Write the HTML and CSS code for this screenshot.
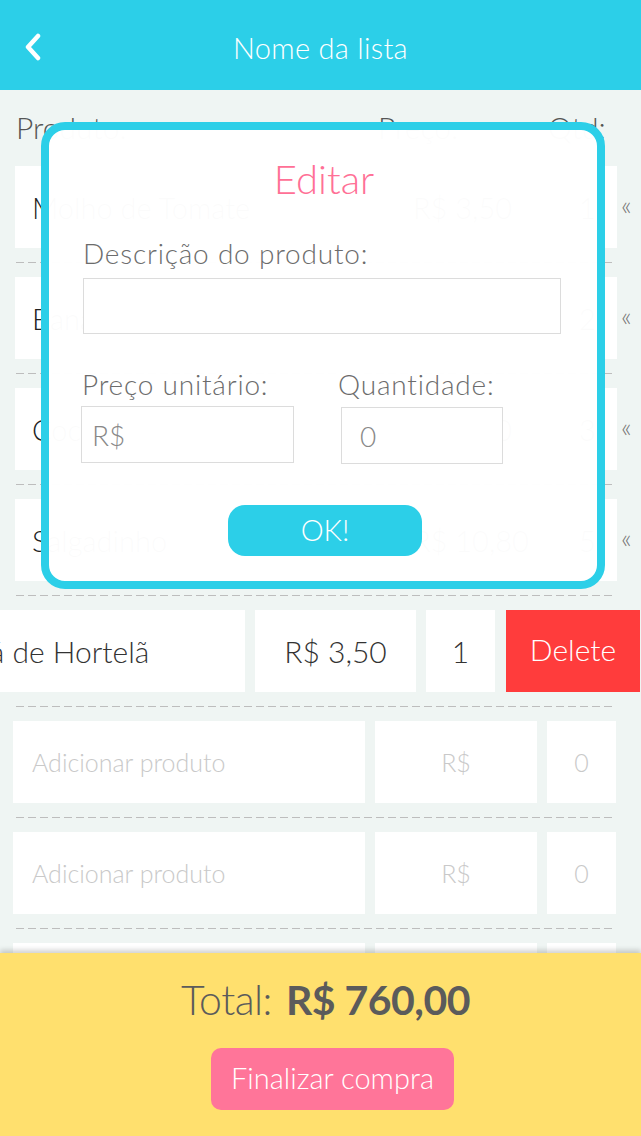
FILE: index.html
```html
<!DOCTYPE html>
<html lang="pt-BR">
<head>
<meta charset="utf-8">
<title>Nome da lista</title>
<link rel="stylesheet" href="styles.css">
</head>
<body>
<div class="app">
  <header class="topbar">
    <span class="back">
      <svg width="18" height="28" viewBox="0 0 18 28"><path d="M14 3 L4 14 L14 25" fill="none" stroke="#fff" stroke-width="4.5" stroke-linecap="round" stroke-linejoin="round"/></svg>
    </span>
    <h1 class="title">Nome da lista</h1>
  </header>

  <main class="content">
    <div class="colheads">
      <span class="ch-name">Produto:</span>
      <span class="ch-price">Preço:</span>
      <span class="ch-qty">Qtd:</span>
    </div>

    <div class="list">
      <div class="item">
        <div class="card"><span class="c-name">Molho de Tomate</span><span class="c-price">R$ 3,50</span><span class="c-qty">1</span></div>
        <span class="hint">«</span>
      </div>
      <div class="sep"></div>
      <div class="item">
        <div class="card"><span class="c-name">Banana</span><span class="c-price">R$ 4,20</span><span class="c-qty">2</span></div>
        <span class="hint">«</span>
      </div>
      <div class="sep"></div>
      <div class="item">
        <div class="card"><span class="c-name">Coca-Cola</span><span class="c-price">R$ 6,90</span><span class="c-qty">3</span></div>
        <span class="hint">«</span>
      </div>
      <div class="sep"></div>
      <div class="item">
        <div class="card"><span class="c-name">Salgadinho</span><span class="c-price">R$ 10,80</span><span class="c-qty">5</span></div>
        <span class="hint">«</span>
      </div>
      <div class="sep"></div>
      <div class="row slid">
        <div class="cell cell-name dark">Chá de Hortelã</div>
        <div class="cell cell-price dark">R$ 3,50</div>
        <div class="cell cell-qty dark">1</div>
        <div class="delete">Delete</div>
      </div>
      <div class="sep"></div>
      <div class="row">
        <div class="cell cell-name ph">Adicionar produto</div>
        <div class="cell cell-price ph">R$</div>
        <div class="cell cell-qty ph">0</div>
      </div>
      <div class="sep"></div>
      <div class="row">
        <div class="cell cell-name ph">Adicionar produto</div>
        <div class="cell cell-price ph">R$</div>
        <div class="cell cell-qty ph">0</div>
      </div>
      <div class="sep"></div>
      <div class="row">
        <div class="cell cell-name"></div>
        <div class="cell cell-price"></div>
        <div class="cell cell-qty"></div>
      </div>
    </div>
  </main>

  <footer class="footer">
    <div class="total"><span class="total-label">Total:</span><span class="total-value">R$ 760,00</span></div>
    <button class="finish">Finalizar compra</button>
  </footer>

  <div class="modal">
    <h2 class="modal-title">Editar</h2>
    <label class="label">Descrição do produto:</label>
    <div class="input input-desc"></div>
    <div class="pair">
      <div class="field f-price">
        <label class="label">Preço unitário:</label>
        <div class="input input-price">R$</div>
      </div>
      <div class="field f-qty">
        <label class="label">Quantidade:</label>
        <div class="input input-qty">0</div>
      </div>
    </div>
    <button class="ok">OK!</button>
  </div>
</div>
</body>
</html>
```

FILE: styles.css
```css
* { box-sizing: border-box; }
html, body { margin: 0; padding: 0; }
body {
  width: 641px;
  height: 1136px;
  overflow: hidden;
  font-family: "Lato", "Open Sans", sans-serif;
  font-weight: 300;
  background: #eff5f3;
}
.app {
  position: relative;
  width: 641px;
  height: 1136px;
  display: flex;
  flex-direction: column;
}
.topbar {
  height: 90px;
  flex: none;
  background: #2ccfe8;
  display: flex;
  align-items: center;
  justify-content: center;
  position: relative;
}
.back {
  position: absolute;
  left: 24px;
  top: 33px;
  display: flex;
}
.title {
  margin: 0;
  font-size: 29px;
  font-weight: 300;
  color: #fff;
  letter-spacing: 0.3px;
  padding: 4px 0 0 0;
}
.content {
  flex: 1;
  overflow: hidden;
  position: relative;
}
.colheads {
  height: 76px;
  display: flex;
  align-items: center;
  font-size: 30px;
  color: #555;
  padding-bottom: 2px;
}
.ch-name { margin-left: 16px; width: 362px; }
.ch-price { width: 170px; }

.item {
  height: 82px;
  display: flex;
  align-items: center;
}
.card {
  margin-left: 15px;
  width: 602px;
  flex: none;
  height: 82px;
  background: #fff;
  display: flex;
  align-items: center;
  font-size: 29px;
  color: #222;
}
.c-name { margin-left: 17px; width: 381px; }
.c-price { width: 166px; color: #333; }
.c-qty { color: #333; }
.hint {
  margin-left: 4px;
  font-size: 27px;
  color: #777;
  line-height: 1;
  padding-bottom: 6px;
}
.sep {
  height: 29px;
  display: flex;
  align-items: center;
  padding: 0 27px 0 16px;
}
.sep::before {
  content: "";
  flex: 1;
  height: 1px;
  background: repeating-linear-gradient(to right, #bdbdbd 0 8px, transparent 8px 12px);
}
.row {
  height: 82px;
  display: flex;
  margin-left: 13px;
  gap: 10px;
}
.row.slid { transform: translateX(-120px); }
.cell {
  flex: none;
  background: #fff;
  height: 82px;
  display: flex;
  align-items: center;
}
.cell-name { width: 352px; padding-left: 19px; }
.cell-price { width: 162px; justify-content: center; }
.cell-qty { width: 69px; justify-content: center; }
.ph { font-size: 25px; color: #c9c9c9; }
.dark { font-size: 30px; color: #333; }
.slid .cell-name { padding-left: 60px; }
.slid .cell-price { width: 161px; }
.delete {
  flex: none;
  margin-left: 1px;
  width: 134px;
  height: 82px;
  background: #ff3c3c;
  color: #fff;
  font-size: 30px;
  display: flex;
  align-items: center;
  justify-content: center;
  padding-bottom: 4px;
}

.footer {
  height: 183px;
  flex: none;
  background: #ffe06e;
  box-shadow: 0 -3px 5px rgba(0,0,0,0.18);
  position: relative;
  display: flex;
  flex-direction: column;
  align-items: center;
}
.total {
  margin: 21px 0 0 10px;
  font-size: 41px;
  line-height: 52px;
  color: #5b5b5b;
  display: flex;
  align-items: baseline;
  gap: 14px;
  letter-spacing: -0.5px;
}
.total-label { font-weight: 300; }
.total-value { font-weight: 700; }
.finish {
  margin: 22px 0 0 24px;
  width: 243px;
  height: 62px;
  border: 0;
  border-radius: 10px;
  background: #ff7599;
  color: #fff;
  font-family: inherit;
  font-weight: 300;
  font-size: 29px;
  padding: 0 0 4px;
}

.modal {
  position: absolute;
  left: 41px;
  top: 122px;
  width: 564px;
  height: 467px;
  border: 8px solid #2ccfe8;
  border-radius: 24px;
  background: rgba(255,255,255,0.985);
  display: flex;
  flex-direction: column;
  padding: 25px 0 0 0;
}
.modal-title {
  margin: 0;
  height: 48px;
  line-height: 48px;
  text-align: center;
  font-size: 40px;
  font-weight: 300;
  color: #ff7096;
  padding-left: 2px;
}
.label {
  display: block;
  height: 34px;
  line-height: 34px;
  font-size: 28px;
  color: #6c6c6c;
  letter-spacing: 0.8px;
  white-space: nowrap;
}
.modal > .label { margin: 33px 0 0 34px; }
.input {
  border: 1px solid #dcdcdc;
  background: #fff;
  display: flex;
  align-items: center;
  font-size: 28px;
  color: #888;
}
.input-desc {
  margin: 8px 0 0 34px;
  width: 478px;
  height: 56px;
}
.pair {
  display: flex;
  margin-top: 33px;
}
.f-price { margin-left: 32px; width: 213px; }
.f-price .label { margin-left: 1px; }
.f-qty { margin-left: 44px; }
.input-price {
  margin-top: 5px;
  width: 213px;
  height: 57px;
  padding-left: 10px;
}
.input-qty {
  margin-top: 6px;
  margin-left: 3px;
  width: 162px;
  height: 57px;
  padding-left: 18px;
}
.ok {
  align-self: center;
  margin: 41px 0 0 4px;
  width: 194px;
  height: 51px;
  border: 0;
  border-radius: 17px;
  background: #2ccfe8;
  color: #fff;
  font-family: inherit;
  font-weight: 300;
  font-size: 29px;
  padding: 0 0 2px;
}
```
